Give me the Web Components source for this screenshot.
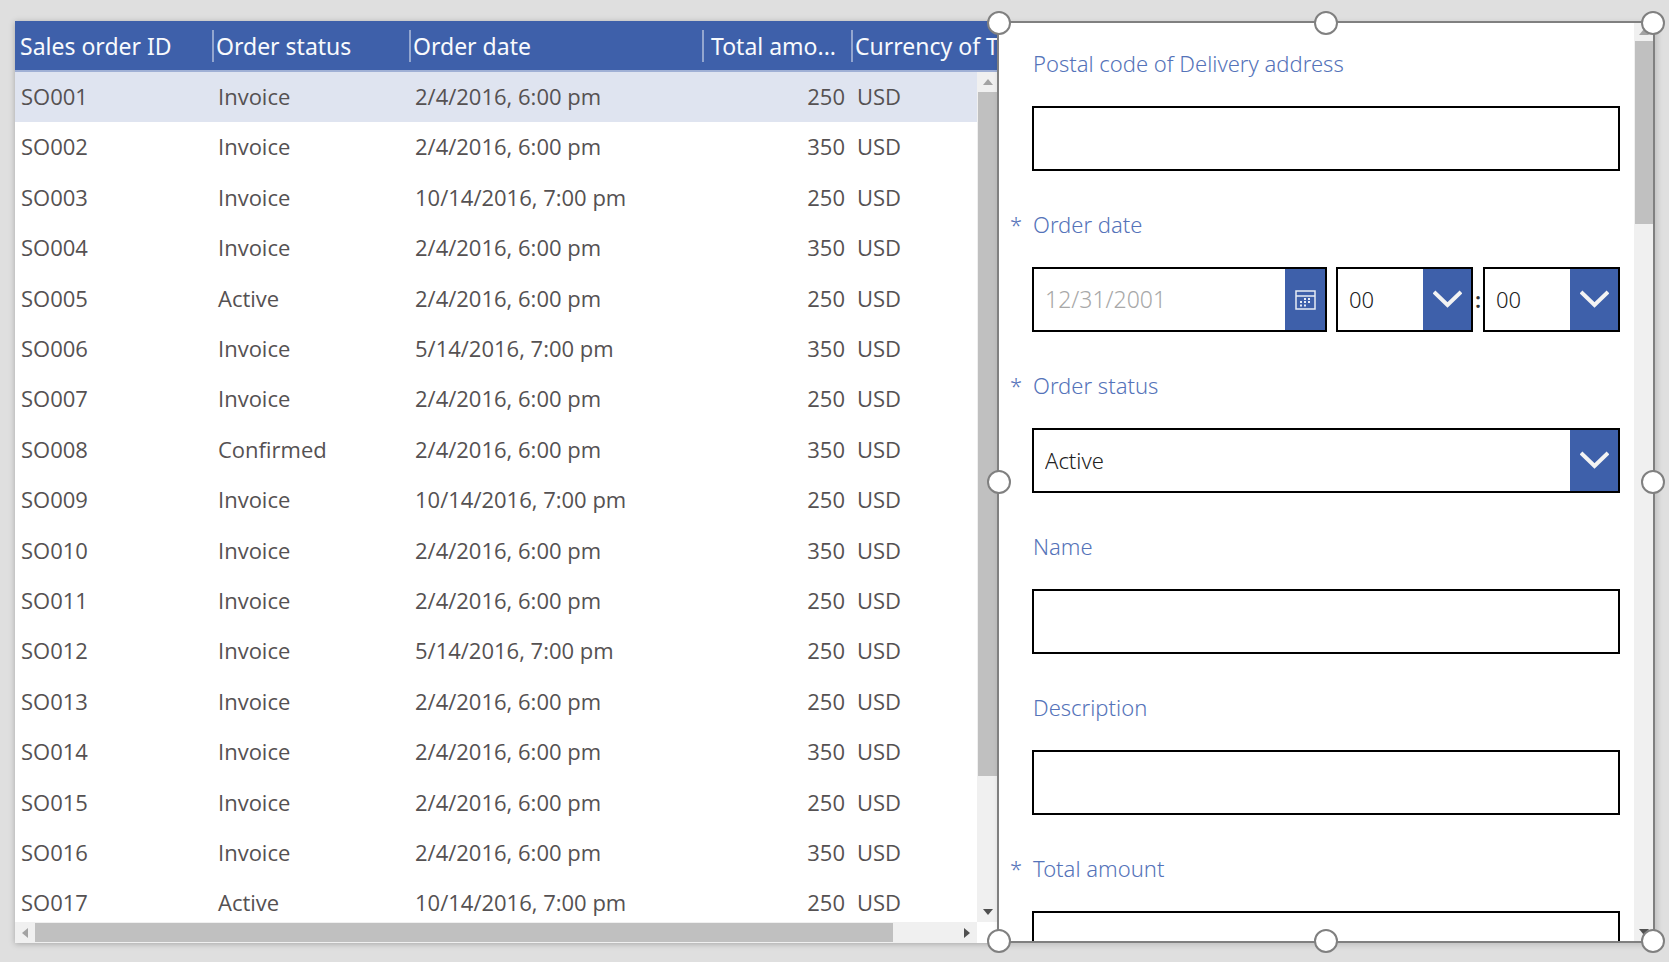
<!DOCTYPE html>
<html lang="en">
<head>
<meta charset="utf-8">
<title>Sales orders</title>
<style>
  html { background: #dfdfdf; }
  body { margin: 0; font-family: "Open Sans", "Noto Sans", sans-serif; font-size: 22px; line-height: 30px; color: #555152; }
</style>
</head>
<body>
<sales-app></sales-app>

<script>
const BLUE = '#3e60aa';

function define(name, html, setup) {
  const template = document.createElement('template');
  template.innerHTML = html;
  customElements.define(name, class extends HTMLElement {
    constructor() {
      super();
      this.attachShadow({ mode: 'open' });
    }
    connectedCallback() {
      if (this.shadowRoot.childNodes.length) return;
      this.shadowRoot.append(template.content.cloneNode(true));
      if (setup) setup(this, this.shadowRoot);
    }
  });
}

/* Scroll bar: the parts attribute holds before / thumb / after shares of the track */
define('scroll-bar', `
<style>
  :host { display: flex; flex-direction: column; background: #f0f0f0; min-width: 0; min-height: 0; }
  :host([horizontal]) { flex-direction: row; }
  .arrow { flex: none; display: flex; align-items: center; justify-content: center; width: 100%; height: var(--arrow, 20px); }
  :host([horizontal]) .arrow { width: 20px; height: 100%; }
  .thumb { background: #c0c0c0; margin: 0 var(--inset, 1px) 0 1px; }
  :host([horizontal]) .thumb { margin: 1px 0; }
  svg { width: 10px; height: 10px; }
  :host([horizontal]) svg { transform: rotate(-90deg); }
  .start { fill: #a3a3a3; }
  .end { fill: #505050; }
</style>
<div class="arrow"><svg class="start" viewBox="0 0 10 10"><path d="M0 8 5 2l5 6z"/></svg></div>
<div class="before"></div><div class="thumb"></div><div class="after"></div>
<div class="arrow"><svg class="end" viewBox="0 0 10 10"><path d="M0 2h10L5 8z"/></svg></div>`,
(host, root) => {
  const parts = host.getAttribute('parts').split(' ');
  ['before', 'thumb', 'after'].forEach((name, i) => {
    root.querySelector('.' + name).style.flex = parts[i] + ' 1 0px';
  });
});

const rows = [
  ['Invoice', '2/4/2016, 6:00 pm', 250], ['Invoice', '2/4/2016, 6:00 pm', 350],
  ['Invoice', '10/14/2016, 7:00 pm', 250], ['Invoice', '2/4/2016, 6:00 pm', 350],
  ['Active', '2/4/2016, 6:00 pm', 250], ['Invoice', '5/14/2016, 7:00 pm', 350],
  ['Invoice', '2/4/2016, 6:00 pm', 250], ['Confirmed', '2/4/2016, 6:00 pm', 350],
  ['Invoice', '10/14/2016, 7:00 pm', 250], ['Invoice', '2/4/2016, 6:00 pm', 350],
  ['Invoice', '2/4/2016, 6:00 pm', 250], ['Invoice', '5/14/2016, 7:00 pm', 250],
  ['Invoice', '2/4/2016, 6:00 pm', 250], ['Invoice', '2/4/2016, 6:00 pm', 350],
  ['Invoice', '2/4/2016, 6:00 pm', 250], ['Invoice', '2/4/2016, 6:00 pm', 350],
  ['Active', '10/14/2016, 7:00 pm', 250]
];

define('order-table', `
<style>
  :host { display: grid; grid-template: 51px minmax(0, 1fr) 21px / minmax(0, 1fr) 21px; background: #fff; min-height: 0; min-width: 0; box-shadow: 0 1px 6px rgba(0,0,0,.25); }
  .view { grid-area: 1 / 1 / 3 / 3; overflow: hidden; }
  table { width: 100%; table-layout: fixed; border-collapse: separate; border-spacing: 0; }
  th, td { padding: 0 6px; text-align: left; font-weight: 400; white-space: nowrap; overflow: hidden; }
  th { height: 49px; padding: 0 0 0 5px; box-sizing: content-box; border-bottom: 2px solid #a0b0d5; background: ${BLUE}; color: #f8fafd; font-family: "Noto Sans", "Open Sans", sans-serif; font-size: 23px; line-height: 32px; }
  th span { display: block; height: 32px; }
  th + th span { border-left: 2px solid #93a6cf; padding-left: 2px; margin-left: -5px; }
  th.total span { padding-left: 7px; }
  td { height: 48px; padding-bottom: 2px; }
  tr:nth-child(5n + 3) td, tr:nth-child(5n) td { height: 49px; }
  tr.selected td { background: #dfe4f0; }
  td:nth-child(4) { text-align: right; }
  .vertical { grid-area: 2 / 2; }
  .horizontal { grid-area: 3 / 1; }
</style>
<div class="view">
  <table>
    <colgroup><col style="width:197px"><col style="width:197px"><col style="width:293px"><col style="width:149px"><col></colgroup>
    <thead><tr>
      <th scope="col"><span>Sales order ID</span></th><th scope="col"><span>Order status</span></th>
      <th scope="col"><span>Order date</span></th><th scope="col" class="total"><span>Total amo...</span></th>
      <th scope="col"><span>Currency of T</span></th>
    </tr></thead>
    <tbody></tbody>
  </table>
</div>
<scroll-bar class="vertical" parts="0 684 126"></scroll-bar>
<scroll-bar class="horizontal" horizontal parts="0 858 64"></scroll-bar>`,
(host, root) => {
  root.querySelector('tbody').innerHTML = rows.map(([status, date, total], i) =>
    `<tr${i ? '' : ' class="selected"'}><td>SO${String(i + 1).padStart(3, '0')}</td><td>${status}</td><td>${date}</td><td>${total}</td><td>USD</td></tr>`).join('');
});

/* Controls of the edit form; every label sits in the same root as its control */
const controls = {
  text: () => `<input class="box" id="control" type="text">`,
  select: value => drop('control', value, ''),
  datetime: () => `
    <div class="box date"><input id="control" type="text" placeholder="12/31/2001">
      <button type="button" aria-label="Open calendar"><svg width="21" height="20" viewBox="0 0 21 20" fill="none" stroke="#e6ebf5"><path d="M1 1h19v18H1zM1 6h19" stroke-width="1.500"/><path d="M9 9h2m2 0h2M5 12h2m2 0h2m2 0h2M5 15.500h2m2 0h2" stroke-width="1.800"/></svg></button>
    </div>
    ${drop('hour', '00', 'Hour')}<span class="colon">:</span>${drop('minute', '00', 'Minute')}`
};
function drop(id, value, label) {
  return `<div class="box drop"><select id="${id}"${label ? ` aria-label="${label}"` : ''}><option>${value}</option></select>
    <svg width="29" height="18" viewBox="0 0 29 18" fill="none" stroke="#f3f3f3" stroke-width="4"><path d="M1 2 14.500 15 28 2"/></svg></div>`;
}

define('form-field', `
<style>
  :host { display: block; height: 161px; font-family: "Noto Sans", "Open Sans", sans-serif; font-weight: 300; }
  .label { display: flex; height: 58px; align-items: flex-start; color: #5573b9; padding-left: 1px; }
  .star { width: 23px; margin-left: -23px; }
  .row { display: flex; height: 65px; }
  .box { box-sizing: border-box; flex: 1 1 0; min-width: 0; height: 65px; border: 2px solid #000; border-radius: 0; background: #fff; display: flex; margin: 0; padding: 0 11px; }
  .date, .drop { padding: 0; }
  .date input, select { flex: 1; min-width: 0; border: 0; margin: 0; padding: 0 11px 2px; background: none; height: 100%; box-sizing: border-box; }
  input, select { font: inherit; color: #222; outline: 0; }
  .date input { font-size: 23px; }
  input::placeholder { color: #a8a8a8; opacity: 1; }
  button { flex: none; width: 40px; padding: 0; border: 0; background: ${BLUE}; display: flex; align-items: center; justify-content: center; }
  .date { margin-right: 9px; }
  .drop { display: grid; grid-template-columns: minmax(0, 1fr) 48px; }
  .datetime .drop { flex: 0 0 137px; }
  select { appearance: none; grid-area: 1 / 1 / 2 / 3; }
  .drop svg { grid-area: 1 / 2; width: 48px; height: 61px; background: ${BLUE}; box-sizing: border-box; padding: 21px 9px 22px 10px; pointer-events: none; }
  .colon { width: 10px; line-height: 65px; text-align: center; color: #333; font-weight: 600; }
</style>
<div class="label"><span class="star"></span><label for="control"><slot></slot></label></div>
<div class="row"></div>`,
(host, root) => {
  const type = host.getAttribute('type') || 'text';
  const row = root.querySelector('.row');
  row.classList.add(type);
  row.innerHTML = controls[type](host.getAttribute('value'));
  if (host.hasAttribute('required')) root.querySelector('.star').textContent = '*';
});

define('edit-form', `
<style>
  :host { display: grid; grid-template-columns: minmax(0, 1fr) 19px; box-sizing: border-box; border: 2px solid #808080; background: #fff; box-shadow: 2px 2px 6px rgba(0,0,0,.15); position: relative; min-height: 0; min-width: 0; }
  form { overflow: hidden; padding: 25px 14px 0 33px; min-height: 0; }
  scroll-bar { --arrow: 18px; --inset: 0px; }
  i { position: absolute; box-sizing: border-box; width: 24px; height: 24px; margin: -12px; border: 2px solid #808080; border-radius: 50%; background: #fff; }
  .w { left: 0; } .c { left: 50%; } .e { left: 100%; }
  .n { top: 0; } .m { top: 50%; } .s { top: 100%; }
</style>
<form>
  <form-field>Postal code of Delivery address</form-field>
  <form-field type="datetime" required>Order date</form-field>
  <form-field type="select" value="Active" required>Order status</form-field>
  <form-field>Name</form-field>
  <form-field>Description</form-field>
  <form-field required>Total amount</form-field>
</form>
<scroll-bar parts="0 183 699"></scroll-bar>
<i class="w n"></i><i class="c n"></i><i class="e n"></i>
<i class="w m"></i><i class="e m"></i>
<i class="w s"></i><i class="c s"></i><i class="e s"></i>`);

define('sales-app', `
<style>
  :host { display: grid; grid-template-columns: minmax(0, 3fr) minmax(0, 2fr); grid-template-rows: minmax(0, 1fr); box-sizing: border-box; height: 100vh; padding: 21px 14px 19px 15px; overflow: hidden; }
  order-table { margin-right: 1px; }
  edit-form { margin-left: -2px; }
</style>
<order-table></order-table>
<edit-form></edit-form>`);
</script>
</body>
</html>
